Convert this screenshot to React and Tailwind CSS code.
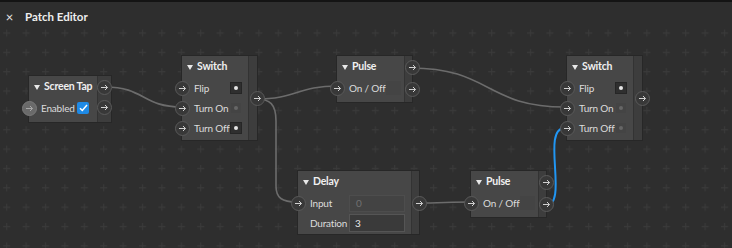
import React from 'react';

function Arrow({ color = '#cfcfcf' }) {
  return (
    <svg width="9" height="9" viewBox="0 0 9 9" fill="none">
      <path d="M1 4.5h6.5M5 2l2.5 2.5L5 7" stroke={color} strokeWidth="1" />
    </svg>
  );
}

function Port({ light = false, className = '' }) {
  return (
    <div
      className={
        'w-[15px] h-[15px] shrink-0 rounded-full flex items-center justify-center border ' +
        (light ? 'bg-[#6a6a6a] border-[#7a7a7a] ' : 'bg-[#383838] border-[#5a5a5a] ') +
        className
      }
    >
      <Arrow color={light ? '#a8a8a8' : '#d0d0d0'} />
    </div>
  );
}

function Title({ children }) {
  return (
    <div className="h-[22px] flex items-center pl-[5px] gap-[4px] text-[10.5px] tracking-[-0.2px] font-bold text-[#f0f0f0] whitespace-nowrap">
      <svg width="6" height="5" viewBox="0 0 6 5" className="shrink-0">
        <path d="M0 0h6L3 5z" fill="#e8e8e8" />
      </svg>
      {children}
    </div>
  );
}

function Toggle({ on }) {
  return (
    <div
      className={
        'w-[12px] h-[12px] flex items-center justify-center border ' +
        (on ? 'bg-[#2f2f2f] border-[#262626]' : 'bg-[#444] border-[#474747]')
      }
    >
      <div className={'w-[4px] h-[4px] rounded-full ' + (on ? 'bg-[#e6e6e6]' : 'bg-[#666]')} />
    </div>
  );
}

function InRow({ label, children, light }) {
  return (
    <div className="h-[20px] flex items-center">
      <Port light={light} className="-ml-[7px]" />
      <span className="ml-[4px] text-[10px] tracking-[-0.2px] text-[#dcdcdc] whitespace-nowrap">{label}</span>
      {children}
    </div>
  );
}

function SwitchNode({ className, toggles }) {
  return (
    <div className={'absolute flex h-[86px] border border-[#272727] ' + className}>
      <div className="w-[66px] bg-[#474747] flex flex-col">
        <Title>Switch</Title>
        {['Flip', 'Turn On', 'Turn Off'].map((l, i) => (
          <InRow key={l} label={l}>
            <div className="ml-auto mr-[6px]">
              <Toggle on={toggles[i]} />
            </div>
          </InRow>
        ))}
      </div>
      <div className="w-[9px] bg-[#3d3d3d] border-l border-[#333] flex items-center justify-end">
        <Port className="-mr-[8px]" />
      </div>
    </div>
  );
}

function PulseNode({ className }) {
  return (
    <div className={'absolute flex h-[48px] border border-[#272727] ' + className}>
      <div className="w-[67px] bg-[#474747] flex flex-col">
        <Title>Pulse</Title>
        <InRow label="On / Off">
          <div className="ml-auto mr-[3px] w-[17px] h-[14px] bg-[#444]" />
        </InRow>
      </div>
      <div className="w-[8px] bg-[#3d3d3d] border-l border-[#333] flex flex-col items-end pt-[4px] gap-[7px]">
        <Port className="-mr-[8px]" />
        <Port className="-mr-[8px]" />
      </div>
    </div>
  );
}

export default function App() {
  return (
    <div
      className="w-[732px] h-[248px] flex flex-col bg-[#2e2e2e] border-t-2 border-[#141414] overflow-hidden"
      style={{ fontFamily: 'Lato, "Noto Sans", sans-serif' }}
    >
      <div className="h-[24px] pt-[6px] flex items-center gap-[11px] pl-[5px]">
        <span className="text-[13px] leading-none text-[#e6e6e6] w-[9px] text-center">×</span>
        <span className="text-[11.5px] font-bold text-[#ededed]">Patch Editor</span>
      </div>

      <div className="relative flex-1">
        <svg className="absolute inset-0" width="732" height="222">
          <defs>
            <pattern id="grid" x="3.2" y="3.5" width="19.4" height="19.35" patternUnits="userSpaceOnUse">
              <path d="M0 3.5h7M3.5 0v7" stroke="#3a3a3a" strokeWidth="1" />
            </pattern>
          </defs>
          <rect width="732" height="222" fill="url(#grid)" />
          <g stroke="#6c6c6c" strokeWidth="1.6" fill="none">
            <path d="M105 61 C145 61 142 81 182 81" />
            <path d="M256 73 C297 73 297 60 338 60" />
            <path d="M256 73 C270 73 276 78 276 95 L276 160 C276 172 282 176 297 176" />
            <path d="M411 42 C490 42 486 81 565 81" />
            <path d="M418 177 C440 177 450 176 471 176" />
          </g>
          <path d="M545 180 C570 180 540 102 565 102" stroke="#2196f3" strokeWidth="2" fill="none" />
        </svg>

        {/* Screen Tap */}
        <div className="absolute left-[28px] top-[49px] flex h-[48px] border border-[#272727]">
          <div className="w-[68px] bg-[#474747] flex flex-col">
            <Title>Screen Tap</Title>
            <InRow label="Enabled" light>
              <div className="ml-auto mr-[8px] w-[12px] h-[12px] rounded-[2px] bg-[#1e8ae6] flex items-center justify-center">
                <svg width="9" height="8" viewBox="0 0 9 8" fill="none">
                  <path d="M1 4.2l2.3 2.3L8 1" stroke="#fff" strokeWidth="1.5" />
                </svg>
              </div>
            </InRow>
          </div>
          <div className="w-[14px] bg-[#3d3d3d] border-l border-[#333] flex flex-col items-center pt-[4px] gap-[5px]">
            <Port />
            <Port />
          </div>
        </div>

        <SwitchNode className="left-[181px] top-[29px]" toggles={[true, false, true]} />
        <PulseNode className="left-[336px] top-[29px]" />
        <SwitchNode className="left-[566px] top-[29px]" toggles={[true, false, false]} />

        {/* Delay */}
        <div className="absolute left-[297px] top-[144px] flex h-[65px] border border-[#272727]">
          <div className="w-[113px] bg-[#474747] flex flex-col">
            <Title>Delay</Title>
            <InRow label="Input">
              <div className="ml-auto mr-[6px] w-[56px] h-[17px] bg-[#434343] border border-[#4d4d4d] text-[10px] text-[#707070] pl-[6px] leading-[15px]">
                0
              </div>
            </InRow>
            <div className="h-[20px] flex items-center">
              <span className="ml-[12px] text-[10px] tracking-[-0.2px] text-[#dcdcdc]">Duration</span>
              <div className="ml-auto mr-[6px] w-[56px] h-[18px] bg-[#3a3a3a] border border-[#555] text-[10px] text-[#e8e8e8] pl-[5px] leading-[16px]">
                3
              </div>
            </div>
          </div>
          <div className="w-[8px] bg-[#3d3d3d] border-l border-[#333] flex flex-col items-end pt-[25px]">
            <Port className="-mr-[8px]" />
          </div>
        </div>

        <PulseNode className="left-[470px] top-[144px]" />
      </div>
    </div>
  );
}
